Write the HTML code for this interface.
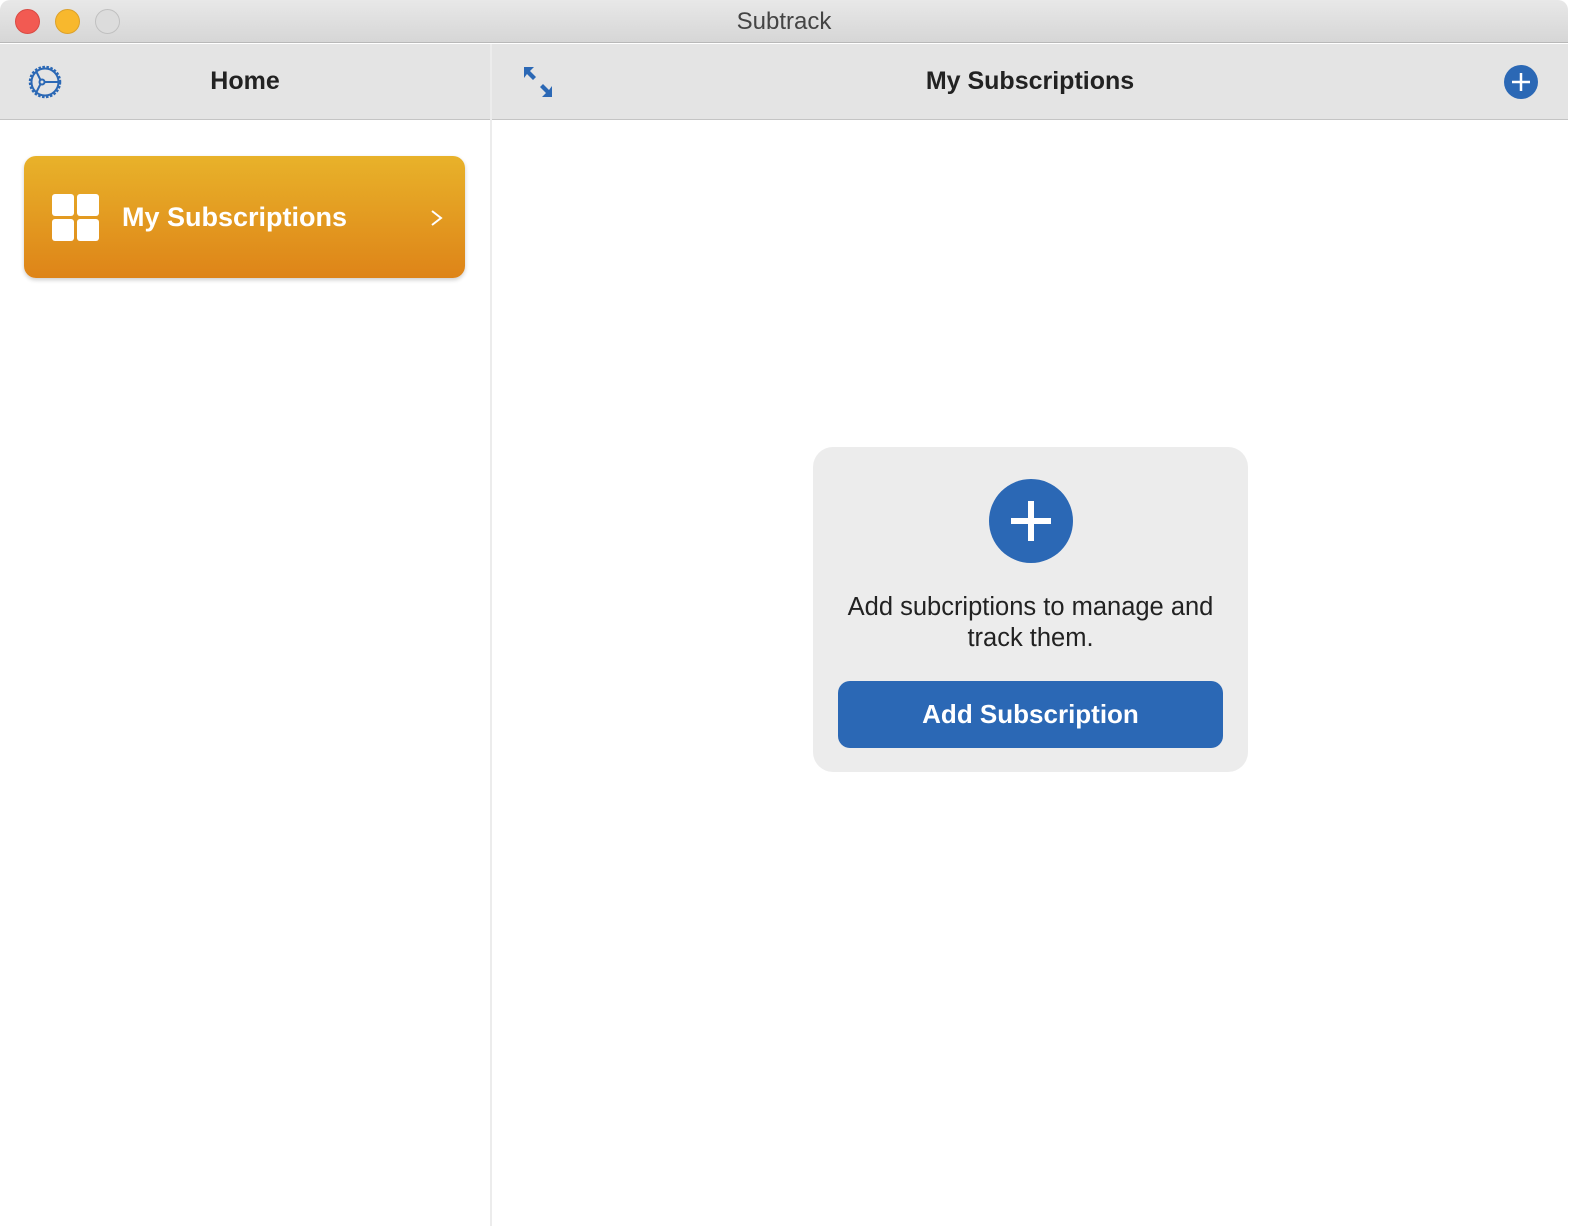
<!DOCTYPE html>
<html><head><meta charset="utf-8"><style>
*{margin:0;padding:0;box-sizing:border-box}
body{width:1578px;height:1226px;background:#fff;font-family:"Liberation Sans",sans-serif;position:relative;overflow:hidden}
.win{position:absolute;left:0;top:0;width:1568px;height:1226px;background:#fff;border-radius:10px 10px 0 0;overflow:hidden}
.title{height:43px;background:linear-gradient(#e8e8e8,#d6d6d6);border-bottom:1px solid #b8b8b8;text-align:center;line-height:44px;font-size:24px;color:#444}
.dot{position:absolute;top:9px;width:25px;height:25px;border-radius:50%}
.tb{position:absolute;top:44px;height:76px;background:#e4e4e4;border-bottom:1px solid #c4c4c4;}
.tb h{display:block;position:absolute;top:0;line-height:74px;font-size:25px;font-weight:bold;color:#222}
.side{position:absolute;left:490px;top:44px;width:2px;height:1182px;background:#ececec}
.card{position:absolute;left:24px;top:156px;width:441px;height:122px;border-radius:12px;background:linear-gradient(#e8b22a,#de8418);box-shadow:0 2px 4px rgba(0,0,0,.2)}
.sq{position:absolute;width:22px;height:22px;background:#fff;border-radius:3px}
.empty{position:absolute;left:813px;top:447px;width:435px;height:325px;background:#ececec;border-radius:20px}
.btn{position:absolute;left:25px;top:234px;width:385px;height:67px;background:#2b68b5;border-radius:12px;color:#fff;font-size:26px;font-weight:bold;text-align:center;line-height:67px}
</style></head><body><div class="win">
<div class="title">Subtrack</div>
<div class="dot" style="left:15px;background:#f25a52;border:1px solid #d94a43"></div>
<div class="dot" style="left:55px;background:#f8b82d;border:1px solid #dca12a"></div>
<div class="dot" style="left:95px;background:#dcdcdc;border:1px solid #c0c0c0"></div>
<div class="tb" style="left:0;width:490px"><h style="left:0;width:490px;text-align:center">Home</h>
<svg style="position:absolute;left:24px;top:18px" width="42" height="40" viewBox="0 0 42 40"><circle cx="21" cy="20" r="15" fill="none" stroke="#2b68b5" stroke-width="2.5" stroke-dasharray="2.5 1.5"/><circle cx="21" cy="20" r="13.5" fill="none" stroke="#2b68b5" stroke-width="2"/><circle cx="18" cy="20" r="2.5" fill="none" stroke="#2b68b5" stroke-width="2"/><path d="M20.5 20H34M16.5 18L12 9M16.5 22L12 31" stroke="#2b68b5" stroke-width="2"/></svg></div>
<div class="tb" style="left:492px;width:1076px"><h style="left:0;width:1076px;text-align:center">My Subscriptions</h>
<svg style="position:absolute;left:28px;top:20px" width="36" height="36" viewBox="0 0 36 36"><path d="M4 3h10l-4 4 6 6-3 3-6-6-3 4z" fill="#2b68b5"/><path d="M32 33H22l4-4-6-6 3-3 6 6 3-4z" fill="#2b68b5"/></svg>
<svg style="position:absolute;left:1011px;top:20px" width="36" height="36" viewBox="0 0 36 36"><circle cx="18" cy="18" r="17" fill="#2b68b5"/><path d="M18 9v18M9 18h18" stroke="#fff" stroke-width="2.5"/></svg></div>
<div class="side"></div>
<div class="card">
<div class="sq" style="left:28px;top:38px"></div><div class="sq" style="left:53px;top:38px"></div><div class="sq" style="left:28px;top:63px"></div><div class="sq" style="left:53px;top:63px"></div>
<div style="position:absolute;left:98px;top:0;line-height:122px;font-size:27px;font-weight:bold;color:#fff">My Subscriptions</div>
<svg style="position:absolute;left:405px;top:53px" width="16" height="18"><path d="M3 2l9 7-9 7" fill="none" stroke="#fff" stroke-width="2"/></svg></div>
<div class="empty">
<svg style="position:absolute;left:176px;top:32px" width="84" height="84" viewBox="0 0 84 84"><circle cx="42" cy="42" r="42" fill="#2b68b5"/><path d="M42 22v40M22 42h40" stroke="#fff" stroke-width="6"/></svg>
<div style="position:absolute;left:0;top:145px;width:435px;text-align:center;font-size:25.5px;line-height:31px;color:#222">Add subcriptions to manage and<br>track them.</div>
<div class="btn">Add Subscription</div></div>
</div></body></html>
